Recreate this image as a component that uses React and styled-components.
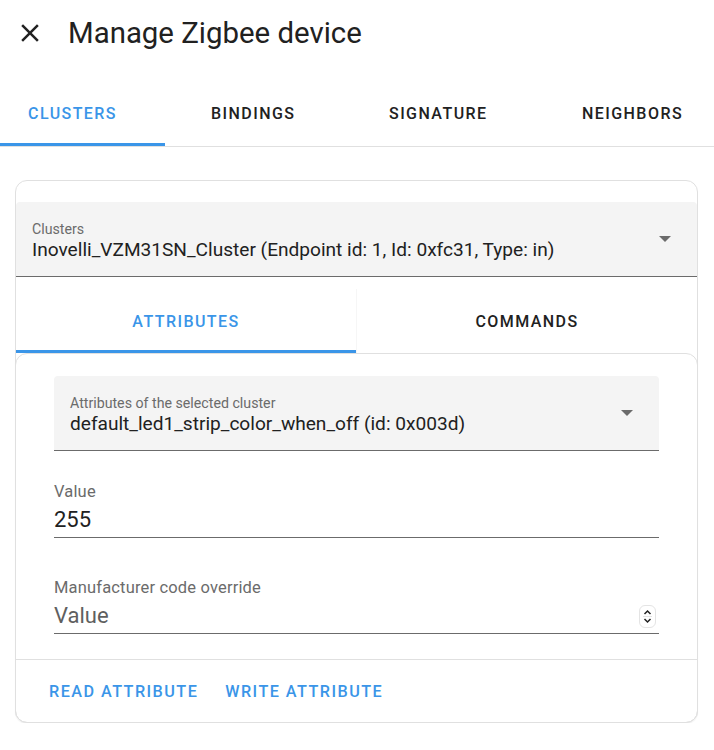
import React, { useState } from 'react';
import styled, { createGlobalStyle } from 'styled-components';

const primary = '#3a95e8';
const text = '#212121';
const secondary = '#6b6b6b';
const divider = '#e0e0e0';

const Global = createGlobalStyle`
  body {
    margin: 0;
    background: #fff;
    font-family: Roboto, "Noto Sans", "Liberation Sans", sans-serif;
    color: ${text};
  }
`;

const Page = styled.div`
  width: 714px;
  display: flex;
  flex-direction: column;
`;

const Header = styled.div`
  height: 66px;
  display: flex;
  align-items: center;
  padding-left: 15px;
`;

const CloseBtn = styled.button`
  border: 0;
  background: none;
  padding: 0;
  width: 30px;
  height: 30px;
  display: flex;
  color: ${text};
`;

const Title = styled.h1`
  margin: 0 0 0 23px;
  font-size: 29.4px;
  font-weight: 400;
  line-height: 34px;
  color: ${text};
`;

const TabBar = styled.div`
  margin-top: 14px;
  display: flex;
  height: 66px;
  border-bottom: 1px solid ${divider};
`;

const Tab = styled.div`
  width: ${p => p.$w}px;
  padding-left: ${p => p.$pl}px;
  box-sizing: border-box;
  display: flex;
  align-items: center;
  font-size: 16px;
  font-weight: 500;
  letter-spacing: 0.09em;
  text-transform: uppercase;
  color: ${p => (p.$active ? primary : text)};
  box-shadow: ${p => (p.$active ? `inset 0 -3px 0 ${primary}` : 'none')};
  cursor: pointer;
`;

const Body = styled.div`
  padding: 33px 16px 0 15px;
`;

const Card = styled.div`
  border: 1px solid ${divider};
  border-radius: 12px;
  padding-top: 21px;
  display: flex;
  flex-direction: column;
`;

const Select = styled.div`
  height: 74px;
  background: #f4f4f4;
  border-radius: 4px 4px 0 0;
  border-bottom: 1px solid ${secondary};
  display: flex;
  align-items: center;
  padding: 0 26px 0 16px;
`;

const SelectText = styled.div`
  flex: 1;
  display: flex;
  flex-direction: column;
  padding-top: 4px;
`;

const SelectLabel = styled.span`
  font-size: 14.2px;
  line-height: 16px;
  color: ${secondary};
  margin-bottom: 1px;
`;

const SelectValue = styled.span`
  font-size: 19.1px;
  line-height: 24px;
  color: ${text};
`;

const Arrow = styled.span`
  width: 0;
  height: 0;
  border-left: 6px solid transparent;
  border-right: 6px solid transparent;
  border-top: 6px solid ${secondary};
`;

const SubTabs = styled.div`
  margin-top: 12px;
  display: flex;
`;

const SubTab = styled.div`
  flex: 1;
  height: 64px;
  display: flex;
  align-items: center;
  justify-content: center;
  font-size: 16px;
  font-weight: 500;
  letter-spacing: 0.09em;
  text-transform: uppercase;
  color: ${p => (p.$active ? primary : text)};
  box-shadow: ${p => (p.$active ? `inset 0 -3px 0 ${primary}` : 'none')};
  border-right: ${p => (p.$split ? '1px solid #f6f6f6' : '0')};
  cursor: pointer;
`;

const InnerCard = styled.div`
  margin: 0 -1px -1px;
  border: 1px solid ${divider};
  border-radius: 12px;
  box-shadow: 0 1px 1px rgba(0, 0, 0, 0.06);
`;

const Content = styled.div`
  padding: 22px 38px 25px;
  display: flex;
  flex-direction: column;
`;

const Field = styled.label`
  display: flex;
  flex-direction: column;
  margin-top: ${p => p.$mt}px;
  border-bottom: 1px solid ${secondary};
  padding-bottom: 3px;
`;

const FieldLabel = styled.span`
  font-size: 16.5px;
  line-height: 20px;
  color: ${secondary};
  letter-spacing: 0.01em;
`;

const FieldRow = styled.div`
  display: flex;
  align-items: center;
  margin-top: 4px;
`;

const FieldValue = styled.span`
  flex: 1;
  font-size: 22px;
  line-height: 28px;
  color: ${p => (p.$placeholder ? '#5f5f5f' : text)};
`;

const Spinner = styled.span`
  width: 15px;
  height: 21px;
  margin-right: 3px;
  border: 1px solid #e4e4e4;
  border-radius: 6px;
  display: flex;
  flex-direction: column;
  align-items: center;
  justify-content: center;
`;

const Actions = styled.div`
  border-top: 1px solid ${divider};
  height: 62px;
  display: flex;
  align-items: center;
  padding-left: 33px;
  gap: 27px;
`;

const TextButton = styled.button`
  border: 0;
  background: none;
  padding: 0;
  font-family: inherit;
  font-size: 16.2px;
  font-weight: 500;
  letter-spacing: 0.09em;
  color: ${primary};
  text-transform: uppercase;
  cursor: pointer;
`;

const CloseIcon = () => (
  <svg width="30" height="30" viewBox="0 0 24 24" fill="currentColor">
    <path d="M19,6.41L17.59,5L12,10.59L6.41,5L5,6.41L10.59,12L5,17.59L6.41,19L12,13.41L17.59,19L19,17.59L13.41,12L19,6.41Z" />
  </svg>
);

const Chevrons = () => (
  <svg width="11" height="17" viewBox="0 0 11 17" fill="none" stroke="#222" strokeWidth="1.5">
    <path d="M2.5 6L5.5 3L8.5 6" />
    <path d="M1 8.5H10" stroke="#e4e4e4" strokeWidth="1" />
    <path d="M2.5 11L5.5 14L8.5 11" />
  </svg>
);

const mainTabs = [
  { label: 'Clusters', w: 165, pl: 28 },
  { label: 'Bindings', w: 183, pl: 46 },
  { label: 'Signature', w: 193, pl: 41 },
  { label: 'Neighbors', w: 173, pl: 41 },
];

export default function App() {
  const [tab, setTab] = useState(0);
  const [sub, setSub] = useState(0);

  return (
    <Page>
      <Global />
      <Header>
        <CloseBtn aria-label="close">
          <CloseIcon />
        </CloseBtn>
        <Title>Manage Zigbee device</Title>
      </Header>
      <TabBar>
        {mainTabs.map((t, i) => (
          <Tab key={t.label} $w={t.w} $pl={t.pl} $active={tab === i} onClick={() => setTab(i)}>
            {t.label}
          </Tab>
        ))}
      </TabBar>
      <Body>
        <Card>
          <Select>
            <SelectText>
              <SelectLabel>Clusters</SelectLabel>
              <SelectValue>Inovelli_VZM31SN_Cluster (Endpoint id: 1, Id: 0xfc31, Type: in)</SelectValue>
            </SelectText>
            <Arrow />
          </Select>
          <SubTabs>
            <SubTab $active={sub === 0} $split onClick={() => setSub(0)}>Attributes</SubTab>
            <SubTab $active={sub === 1} onClick={() => setSub(1)}>Commands</SubTab>
          </SubTabs>
          <InnerCard>
            <Content>
              <Select>
                <SelectText>
                  <SelectLabel>Attributes of the selected cluster</SelectLabel>
                  <SelectValue>default_led1_strip_color_when_off (id: 0x003d)</SelectValue>
                </SelectText>
                <Arrow />
              </Select>
              <Field $mt={31}>
                <FieldLabel>Value</FieldLabel>
                <FieldRow>
                  <FieldValue>255</FieldValue>
                </FieldRow>
              </Field>
              <Field $mt={40}>
                <FieldLabel>Manufacturer code override</FieldLabel>
                <FieldRow>
                  <FieldValue $placeholder>Value</FieldValue>
                  <Spinner>
                    <Chevrons />
                  </Spinner>
                </FieldRow>
              </Field>
            </Content>
            <Actions>
              <TextButton>Read attribute</TextButton>
              <TextButton>Write attribute</TextButton>
            </Actions>
          </InnerCard>
        </Card>
      </Body>
    </Page>
  );
}
